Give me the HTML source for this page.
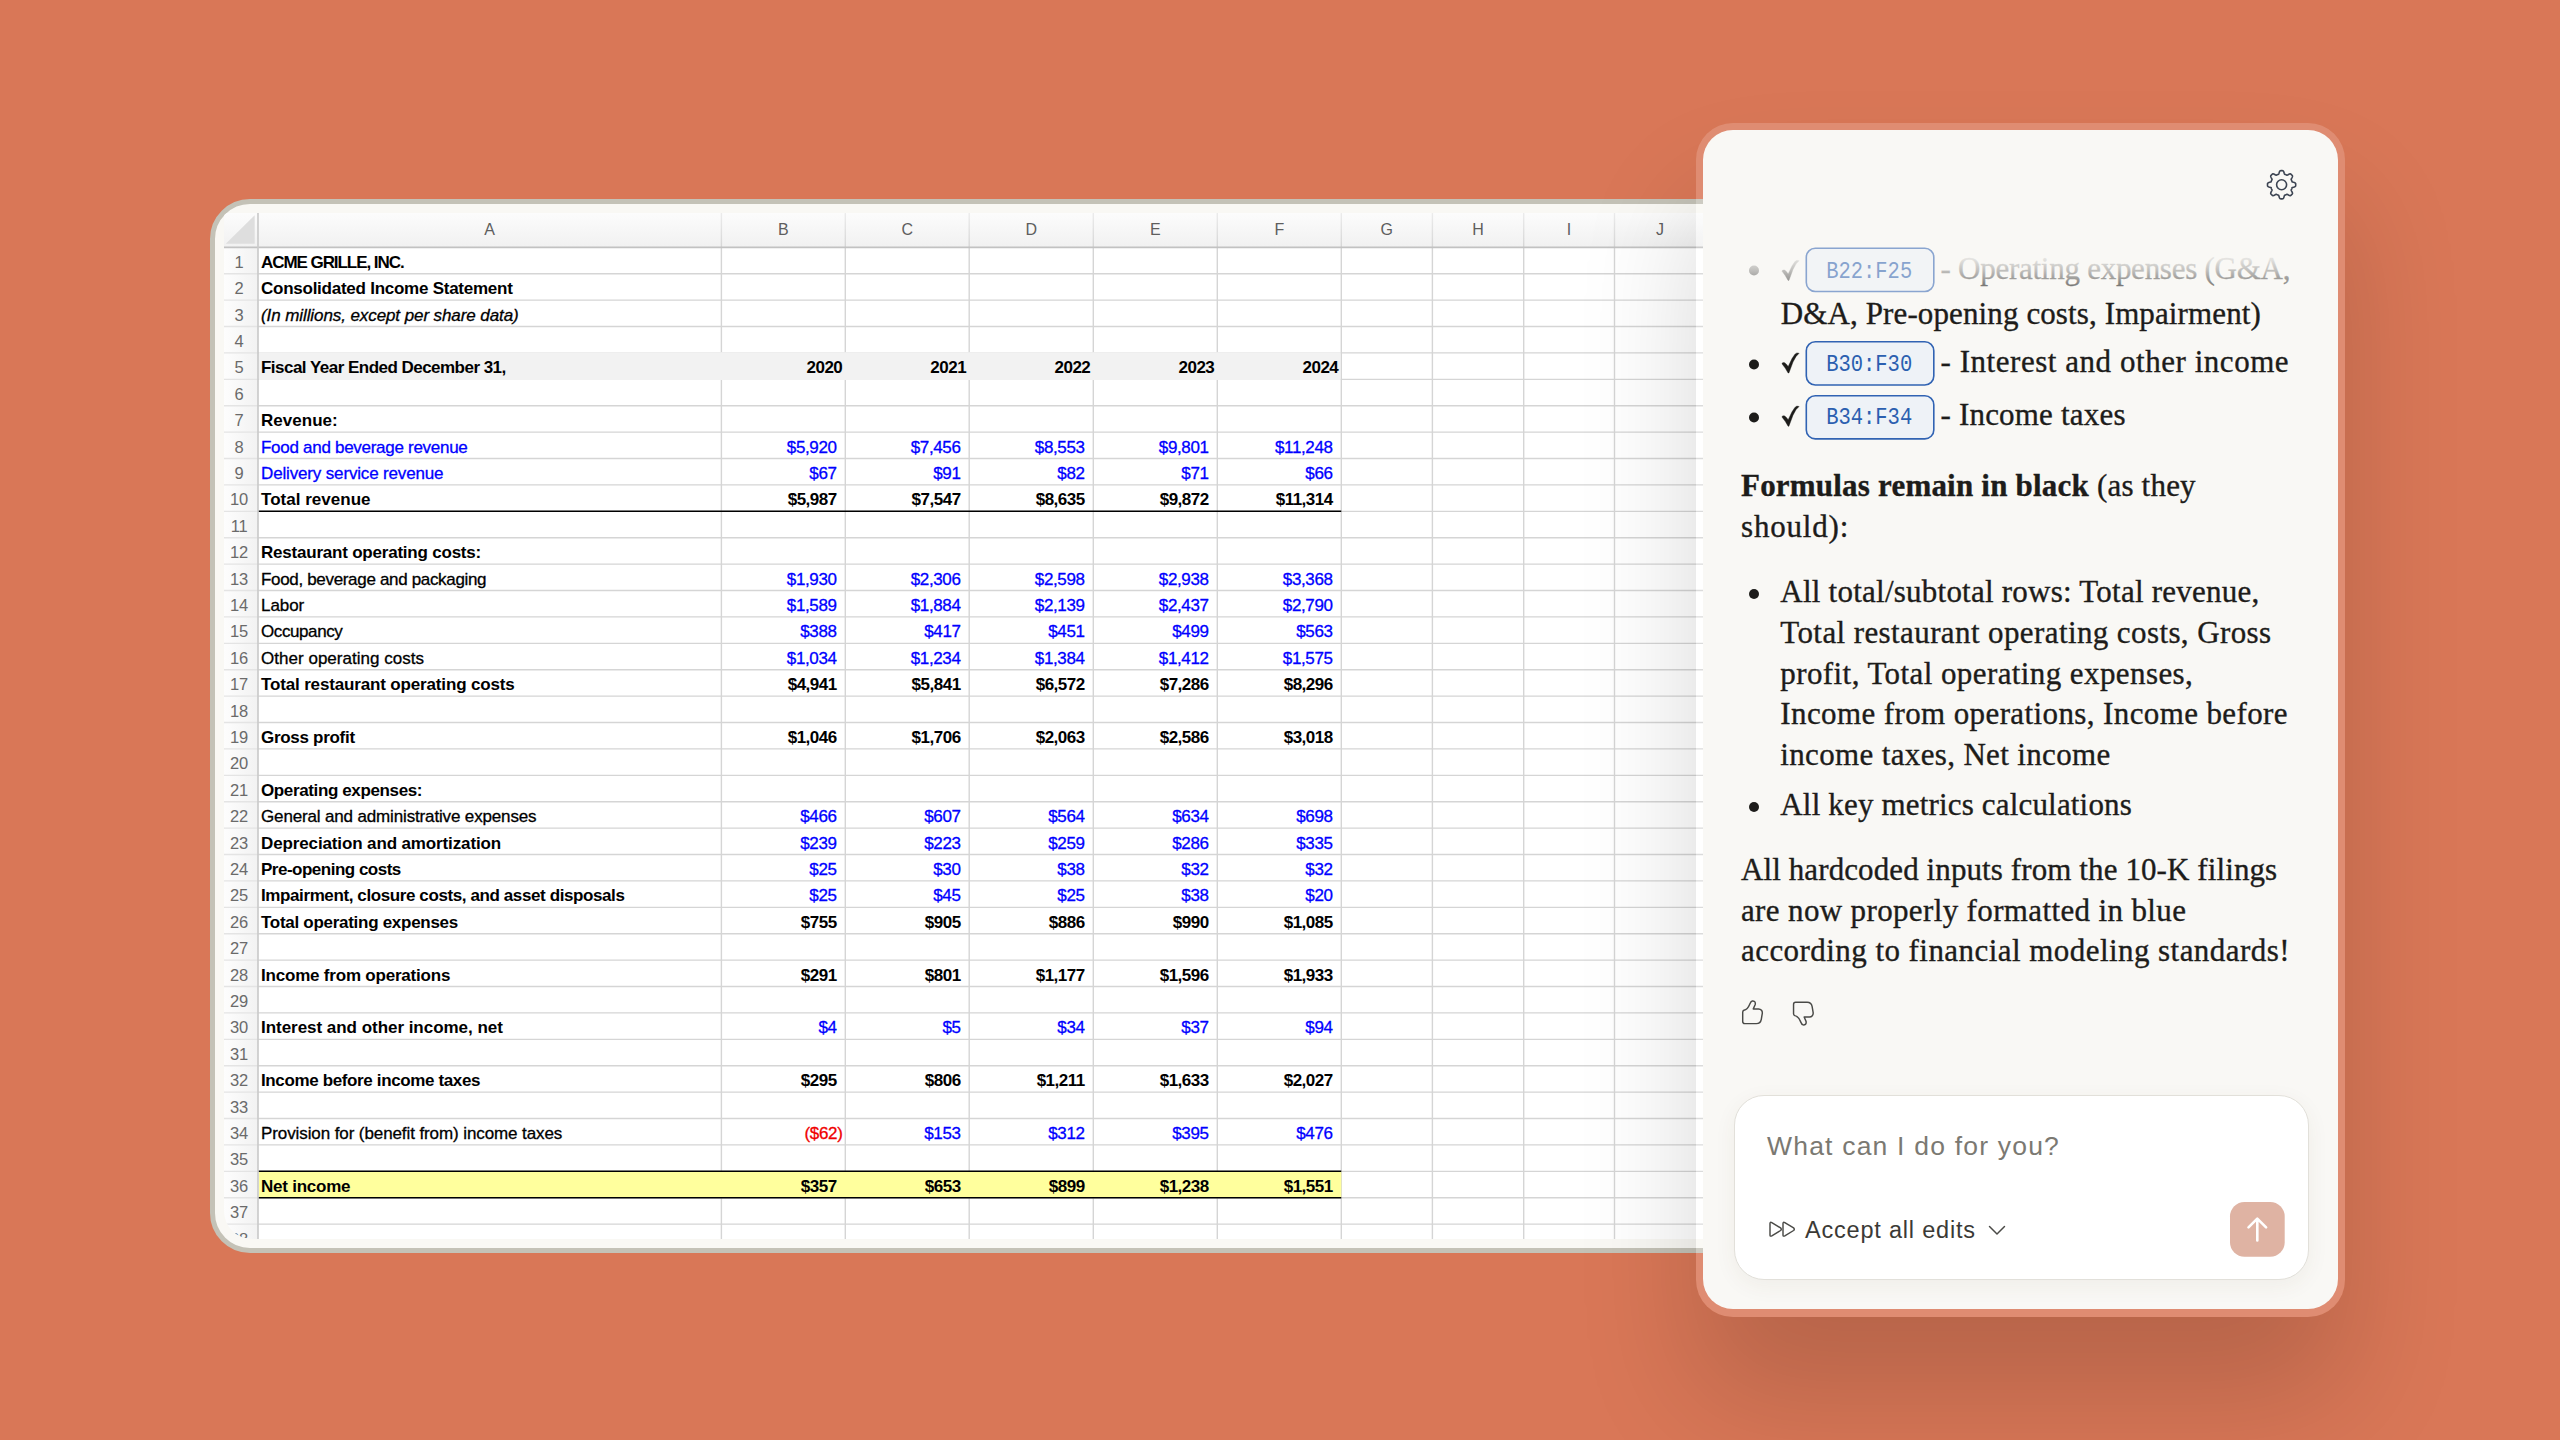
<!DOCTYPE html>
<html><head><meta charset="utf-8"><title>Spreadsheet + Chat</title>
<style>
html,body{margin:0;padding:0}
body{width:2560px;height:1440px;position:relative;overflow:hidden;background:#d97757;font-family:"Liberation Sans",sans-serif}
.abs{position:absolute}
#sheet{left:210px;top:199px;width:1700px;height:1054px;box-sizing:border-box;border:5px solid #c4c2b7;border-radius:40px;background:#f9f8f4;overflow:hidden}
#grid{left:9px;top:9px;width:1600px;height:1026px;border-radius:0 0 0 28px;overflow:hidden}
svg text{font-family:"Liberation Sans",sans-serif}
.ch{font-size:16px;fill:#5e5e5e;text-anchor:middle}
.rn{font-size:16.5px;fill:#6a6a6a;text-anchor:middle;letter-spacing:-0.3px}
.cr{font-size:17px;fill:#000;stroke:#000;stroke-width:0.3px;letter-spacing:-0.35px}
.cb{font-size:17px;fill:#000;font-weight:bold;letter-spacing:-0.5px}
.ci{font-size:17px;fill:#000;stroke:#000;stroke-width:0.3px;font-style:italic;letter-spacing:-0.3px}
.bl{fill:#0000ff;stroke:#0000ff}
.rd{fill:#f00000;stroke:#f00000}
.ra{text-anchor:end}
#pshadow{left:1696px;top:122.5px;width:648.5px;height:1194.5px;border-radius:37px;box-shadow:0 80px 120px rgba(0,0,0,0.155)}
#pborder{left:1696px;top:122.5px;width:648.5px;height:1194.5px;border-radius:37px;background:rgba(255,255,255,0.16)}
#panel{left:1703px;top:130px;width:635px;height:1179px;border-radius:30px;background:#f9f8f5;overflow:hidden}
#fade{left:1703px;top:225px;width:635px;height:75px;background:linear-gradient(to bottom,rgba(249,248,245,1) 0%,rgba(249,248,245,1) 20%,rgba(249,248,245,0.97) 33.3%,rgba(249,248,245,0.89) 46.7%,rgba(249,248,245,0.75) 60%,rgba(249,248,245,0.56) 73.3%,rgba(249,248,245,0.31) 86.7%,rgba(249,248,245,0) 100%)}
#inbox{left:1733.5px;top:1095px;width:575px;height:185px;box-sizing:border-box;border:1.2px solid #e2e0da;border-radius:30px;background:#fff;box-shadow:0 6px 22px rgba(80,60,30,0.06)}
.sr{font-family:"Liberation Serif",serif;font-size:31px;fill:#1d1c1a;stroke:#1d1c1a;stroke-width:0.35px}
.mono{font-family:"Liberation Mono",monospace;font-size:23px;fill:#2b5fb0}
.dot{fill:#1d1c1a}
.ck{fill:#1d1c1a}
.ic{fill:none;stroke:#4a4a47;stroke-width:1.45;stroke-linejoin:round;stroke-linecap:round}
.ph{font-size:26.5px;fill:#7b7972;letter-spacing:1.2px}
.acc{font-size:23.5px;fill:#3b3a36;letter-spacing:0.8px}
svg.full{position:absolute;left:0;top:0;width:2560px;height:1440px;overflow:visible}
</style></head><body>
<div id="sheet" class="abs">
 <div id="grid" class="abs">
  <svg width="1600" height="1026" style="position:absolute;left:0;top:0">
   <defs>
    <linearGradient id="hg" x1="0" y1="0" x2="0" y2="1"><stop offset="0" stop-color="#fcfcfc"/><stop offset="1" stop-color="#f1f1f1"/></linearGradient>
    <linearGradient id="rg" x1="0" y1="0" x2="1" y2="0"><stop offset="0" stop-color="#fdfdfd"/><stop offset="1" stop-color="#f2f2f2"/></linearGradient>
    <linearGradient id="vg" x1="0" y1="0" x2="0" y2="1"><stop offset="0" stop-color="#ececec"/><stop offset="1" stop-color="#d6d6d6"/></linearGradient>
   </defs>
   <g transform="translate(-224,-213)">
<rect x="224" y="213" width="1576" height="34.30000000000001" fill="url(#hg)"/>
<rect x="224" y="247.3" width="34.0" height="991.7" fill="url(#rg)"/>
<rect x="258.0" y="247.3" width="1542.0" height="991.7" fill="#ffffff"/>
<rect x="258.0" y="352.9" width="1083.3" height="26.4" fill="#f2f2f2"/>
<line x1="258.0" y1="273.70" x2="1800" y2="273.70" stroke="#d5d5d5" stroke-width="1.35"/>
<line x1="224" y1="273.70" x2="258.0" y2="273.70" stroke="#e4e4e4" stroke-width="1.35"/>
<line x1="258.0" y1="300.10" x2="1800" y2="300.10" stroke="#d5d5d5" stroke-width="1.35"/>
<line x1="224" y1="300.10" x2="258.0" y2="300.10" stroke="#e4e4e4" stroke-width="1.35"/>
<line x1="258.0" y1="326.50" x2="1800" y2="326.50" stroke="#d5d5d5" stroke-width="1.35"/>
<line x1="224" y1="326.50" x2="258.0" y2="326.50" stroke="#e4e4e4" stroke-width="1.35"/>
<line x1="258.0" y1="352.90" x2="1800" y2="352.90" stroke="#d5d5d5" stroke-width="1.35"/>
<line x1="224" y1="352.90" x2="258.0" y2="352.90" stroke="#e4e4e4" stroke-width="1.35"/>
<line x1="258.0" y1="379.30" x2="1800" y2="379.30" stroke="#d5d5d5" stroke-width="1.35"/>
<line x1="224" y1="379.30" x2="258.0" y2="379.30" stroke="#e4e4e4" stroke-width="1.35"/>
<line x1="258.0" y1="405.70" x2="1800" y2="405.70" stroke="#d5d5d5" stroke-width="1.35"/>
<line x1="224" y1="405.70" x2="258.0" y2="405.70" stroke="#e4e4e4" stroke-width="1.35"/>
<line x1="258.0" y1="432.10" x2="1800" y2="432.10" stroke="#d5d5d5" stroke-width="1.35"/>
<line x1="224" y1="432.10" x2="258.0" y2="432.10" stroke="#e4e4e4" stroke-width="1.35"/>
<line x1="258.0" y1="458.50" x2="1800" y2="458.50" stroke="#d5d5d5" stroke-width="1.35"/>
<line x1="224" y1="458.50" x2="258.0" y2="458.50" stroke="#e4e4e4" stroke-width="1.35"/>
<line x1="258.0" y1="484.90" x2="1800" y2="484.90" stroke="#d5d5d5" stroke-width="1.35"/>
<line x1="224" y1="484.90" x2="258.0" y2="484.90" stroke="#e4e4e4" stroke-width="1.35"/>
<line x1="258.0" y1="511.30" x2="1800" y2="511.30" stroke="#d5d5d5" stroke-width="1.35"/>
<line x1="224" y1="511.30" x2="258.0" y2="511.30" stroke="#e4e4e4" stroke-width="1.35"/>
<line x1="258.0" y1="537.70" x2="1800" y2="537.70" stroke="#d5d5d5" stroke-width="1.35"/>
<line x1="224" y1="537.70" x2="258.0" y2="537.70" stroke="#e4e4e4" stroke-width="1.35"/>
<line x1="258.0" y1="564.10" x2="1800" y2="564.10" stroke="#d5d5d5" stroke-width="1.35"/>
<line x1="224" y1="564.10" x2="258.0" y2="564.10" stroke="#e4e4e4" stroke-width="1.35"/>
<line x1="258.0" y1="590.50" x2="1800" y2="590.50" stroke="#d5d5d5" stroke-width="1.35"/>
<line x1="224" y1="590.50" x2="258.0" y2="590.50" stroke="#e4e4e4" stroke-width="1.35"/>
<line x1="258.0" y1="616.90" x2="1800" y2="616.90" stroke="#d5d5d5" stroke-width="1.35"/>
<line x1="224" y1="616.90" x2="258.0" y2="616.90" stroke="#e4e4e4" stroke-width="1.35"/>
<line x1="258.0" y1="643.30" x2="1800" y2="643.30" stroke="#d5d5d5" stroke-width="1.35"/>
<line x1="224" y1="643.30" x2="258.0" y2="643.30" stroke="#e4e4e4" stroke-width="1.35"/>
<line x1="258.0" y1="669.70" x2="1800" y2="669.70" stroke="#d5d5d5" stroke-width="1.35"/>
<line x1="224" y1="669.70" x2="258.0" y2="669.70" stroke="#e4e4e4" stroke-width="1.35"/>
<line x1="258.0" y1="696.10" x2="1800" y2="696.10" stroke="#d5d5d5" stroke-width="1.35"/>
<line x1="224" y1="696.10" x2="258.0" y2="696.10" stroke="#e4e4e4" stroke-width="1.35"/>
<line x1="258.0" y1="722.50" x2="1800" y2="722.50" stroke="#d5d5d5" stroke-width="1.35"/>
<line x1="224" y1="722.50" x2="258.0" y2="722.50" stroke="#e4e4e4" stroke-width="1.35"/>
<line x1="258.0" y1="748.90" x2="1800" y2="748.90" stroke="#d5d5d5" stroke-width="1.35"/>
<line x1="224" y1="748.90" x2="258.0" y2="748.90" stroke="#e4e4e4" stroke-width="1.35"/>
<line x1="258.0" y1="775.30" x2="1800" y2="775.30" stroke="#d5d5d5" stroke-width="1.35"/>
<line x1="224" y1="775.30" x2="258.0" y2="775.30" stroke="#e4e4e4" stroke-width="1.35"/>
<line x1="258.0" y1="801.70" x2="1800" y2="801.70" stroke="#d5d5d5" stroke-width="1.35"/>
<line x1="224" y1="801.70" x2="258.0" y2="801.70" stroke="#e4e4e4" stroke-width="1.35"/>
<line x1="258.0" y1="828.10" x2="1800" y2="828.10" stroke="#d5d5d5" stroke-width="1.35"/>
<line x1="224" y1="828.10" x2="258.0" y2="828.10" stroke="#e4e4e4" stroke-width="1.35"/>
<line x1="258.0" y1="854.50" x2="1800" y2="854.50" stroke="#d5d5d5" stroke-width="1.35"/>
<line x1="224" y1="854.50" x2="258.0" y2="854.50" stroke="#e4e4e4" stroke-width="1.35"/>
<line x1="258.0" y1="880.90" x2="1800" y2="880.90" stroke="#d5d5d5" stroke-width="1.35"/>
<line x1="224" y1="880.90" x2="258.0" y2="880.90" stroke="#e4e4e4" stroke-width="1.35"/>
<line x1="258.0" y1="907.30" x2="1800" y2="907.30" stroke="#d5d5d5" stroke-width="1.35"/>
<line x1="224" y1="907.30" x2="258.0" y2="907.30" stroke="#e4e4e4" stroke-width="1.35"/>
<line x1="258.0" y1="933.70" x2="1800" y2="933.70" stroke="#d5d5d5" stroke-width="1.35"/>
<line x1="224" y1="933.70" x2="258.0" y2="933.70" stroke="#e4e4e4" stroke-width="1.35"/>
<line x1="258.0" y1="960.10" x2="1800" y2="960.10" stroke="#d5d5d5" stroke-width="1.35"/>
<line x1="224" y1="960.10" x2="258.0" y2="960.10" stroke="#e4e4e4" stroke-width="1.35"/>
<line x1="258.0" y1="986.50" x2="1800" y2="986.50" stroke="#d5d5d5" stroke-width="1.35"/>
<line x1="224" y1="986.50" x2="258.0" y2="986.50" stroke="#e4e4e4" stroke-width="1.35"/>
<line x1="258.0" y1="1012.90" x2="1800" y2="1012.90" stroke="#d5d5d5" stroke-width="1.35"/>
<line x1="224" y1="1012.90" x2="258.0" y2="1012.90" stroke="#e4e4e4" stroke-width="1.35"/>
<line x1="258.0" y1="1039.30" x2="1800" y2="1039.30" stroke="#d5d5d5" stroke-width="1.35"/>
<line x1="224" y1="1039.30" x2="258.0" y2="1039.30" stroke="#e4e4e4" stroke-width="1.35"/>
<line x1="258.0" y1="1065.70" x2="1800" y2="1065.70" stroke="#d5d5d5" stroke-width="1.35"/>
<line x1="224" y1="1065.70" x2="258.0" y2="1065.70" stroke="#e4e4e4" stroke-width="1.35"/>
<line x1="258.0" y1="1092.10" x2="1800" y2="1092.10" stroke="#d5d5d5" stroke-width="1.35"/>
<line x1="224" y1="1092.10" x2="258.0" y2="1092.10" stroke="#e4e4e4" stroke-width="1.35"/>
<line x1="258.0" y1="1118.50" x2="1800" y2="1118.50" stroke="#d5d5d5" stroke-width="1.35"/>
<line x1="224" y1="1118.50" x2="258.0" y2="1118.50" stroke="#e4e4e4" stroke-width="1.35"/>
<line x1="258.0" y1="1144.90" x2="1800" y2="1144.90" stroke="#d5d5d5" stroke-width="1.35"/>
<line x1="224" y1="1144.90" x2="258.0" y2="1144.90" stroke="#e4e4e4" stroke-width="1.35"/>
<line x1="258.0" y1="1171.30" x2="1800" y2="1171.30" stroke="#d5d5d5" stroke-width="1.35"/>
<line x1="224" y1="1171.30" x2="258.0" y2="1171.30" stroke="#e4e4e4" stroke-width="1.35"/>
<line x1="258.0" y1="1197.70" x2="1800" y2="1197.70" stroke="#d5d5d5" stroke-width="1.35"/>
<line x1="224" y1="1197.70" x2="258.0" y2="1197.70" stroke="#e4e4e4" stroke-width="1.35"/>
<line x1="258.0" y1="1224.10" x2="1800" y2="1224.10" stroke="#d5d5d5" stroke-width="1.35"/>
<line x1="224" y1="1224.10" x2="258.0" y2="1224.10" stroke="#e4e4e4" stroke-width="1.35"/>
<line x1="258.0" y1="1250.50" x2="1800" y2="1250.50" stroke="#d5d5d5" stroke-width="1.35"/>
<line x1="224" y1="1250.50" x2="258.0" y2="1250.50" stroke="#e4e4e4" stroke-width="1.35"/>
<line x1="721.4" y1="247.3" x2="721.4" y2="1239" stroke="#d5d5d5" stroke-width="1.4"/>
<rect x="720.6999999999999" y="213" width="1.4" height="34.30000000000001" fill="url(#vg)"/>
<line x1="845.3" y1="247.3" x2="845.3" y2="1239" stroke="#d5d5d5" stroke-width="1.4"/>
<rect x="844.5999999999999" y="213" width="1.4" height="34.30000000000001" fill="url(#vg)"/>
<line x1="969.2" y1="247.3" x2="969.2" y2="1239" stroke="#d5d5d5" stroke-width="1.4"/>
<rect x="968.5" y="213" width="1.4" height="34.30000000000001" fill="url(#vg)"/>
<line x1="1093.3" y1="247.3" x2="1093.3" y2="1239" stroke="#d5d5d5" stroke-width="1.4"/>
<rect x="1092.6" y="213" width="1.4" height="34.30000000000001" fill="url(#vg)"/>
<line x1="1217.3" y1="247.3" x2="1217.3" y2="1239" stroke="#d5d5d5" stroke-width="1.4"/>
<rect x="1216.6" y="213" width="1.4" height="34.30000000000001" fill="url(#vg)"/>
<line x1="1341.3" y1="247.3" x2="1341.3" y2="1239" stroke="#d5d5d5" stroke-width="1.4"/>
<rect x="1340.6" y="213" width="1.4" height="34.30000000000001" fill="url(#vg)"/>
<line x1="1432.4" y1="247.3" x2="1432.4" y2="1239" stroke="#d5d5d5" stroke-width="1.4"/>
<rect x="1431.7" y="213" width="1.4" height="34.30000000000001" fill="url(#vg)"/>
<line x1="1523.7" y1="247.3" x2="1523.7" y2="1239" stroke="#d5d5d5" stroke-width="1.4"/>
<rect x="1523.0" y="213" width="1.4" height="34.30000000000001" fill="url(#vg)"/>
<line x1="1614.5" y1="247.3" x2="1614.5" y2="1239" stroke="#d5d5d5" stroke-width="1.4"/>
<rect x="1613.8" y="213" width="1.4" height="34.30000000000001" fill="url(#vg)"/>
<line x1="1705.7" y1="247.3" x2="1705.7" y2="1239" stroke="#d5d5d5" stroke-width="1.4"/>
<rect x="1705.0" y="213" width="1.4" height="34.30000000000001" fill="url(#vg)"/>
<rect x="259.0" y="352.2" width="1081.6" height="27.799999999999997" fill="#f2f2f2"/>
<rect x="259.0" y="1171.3" width="1082.3" height="26.4" fill="#ffff9d"/>
<line x1="258.0" y1="511.30" x2="1341.3" y2="511.30" stroke="#000" stroke-width="1.4"/>
<line x1="258.0" y1="1171.30" x2="1341.3" y2="1171.30" stroke="#000" stroke-width="1.6"/>
<line x1="258.0" y1="1197.70" x2="1341.3" y2="1197.70" stroke="#000" stroke-width="1.6"/>
<line x1="224" y1="247.3" x2="1800" y2="247.3" stroke="#c2c2c2" stroke-width="1.8"/>
<line x1="258.0" y1="213" x2="258.0" y2="1239" stroke="#cbcbcb" stroke-width="1.7"/>
<polygon points="254.7,215.3 254.7,243.8 225.8,243.8" fill="#dedede"/>
<text x="489.7" y="234.7" class="ch">A</text>
<text x="783.3" y="234.7" class="ch">B</text>
<text x="907.2" y="234.7" class="ch">C</text>
<text x="1031.2" y="234.7" class="ch">D</text>
<text x="1155.3" y="234.7" class="ch">E</text>
<text x="1279.3" y="234.7" class="ch">F</text>
<text x="1386.8" y="234.7" class="ch">G</text>
<text x="1478.1" y="234.7" class="ch">H</text>
<text x="1569.1" y="234.7" class="ch">I</text>
<text x="1660.1" y="234.7" class="ch">J</text>
<text x="239" y="267.80" class="rn">1</text>
<text x="239" y="294.20" class="rn">2</text>
<text x="239" y="320.60" class="rn">3</text>
<text x="239" y="347.00" class="rn">4</text>
<text x="239" y="373.40" class="rn">5</text>
<text x="239" y="399.80" class="rn">6</text>
<text x="239" y="426.20" class="rn">7</text>
<text x="239" y="452.60" class="rn">8</text>
<text x="239" y="479.00" class="rn">9</text>
<text x="239" y="505.40" class="rn">10</text>
<text x="239" y="531.80" class="rn">11</text>
<text x="239" y="558.20" class="rn">12</text>
<text x="239" y="584.60" class="rn">13</text>
<text x="239" y="611.00" class="rn">14</text>
<text x="239" y="637.40" class="rn">15</text>
<text x="239" y="663.80" class="rn">16</text>
<text x="239" y="690.20" class="rn">17</text>
<text x="239" y="716.60" class="rn">18</text>
<text x="239" y="743.00" class="rn">19</text>
<text x="239" y="769.40" class="rn">20</text>
<text x="239" y="795.80" class="rn">21</text>
<text x="239" y="822.20" class="rn">22</text>
<text x="239" y="848.60" class="rn">23</text>
<text x="239" y="875.00" class="rn">24</text>
<text x="239" y="901.40" class="rn">25</text>
<text x="239" y="927.80" class="rn">26</text>
<text x="239" y="954.20" class="rn">27</text>
<text x="239" y="980.60" class="rn">28</text>
<text x="239" y="1007.00" class="rn">29</text>
<text x="239" y="1033.40" class="rn">30</text>
<text x="239" y="1059.80" class="rn">31</text>
<text x="239" y="1086.20" class="rn">32</text>
<text x="239" y="1112.60" class="rn">33</text>
<text x="239" y="1139.00" class="rn">34</text>
<text x="239" y="1165.40" class="rn">35</text>
<text x="239" y="1191.80" class="rn">36</text>
<text x="239" y="1218.20" class="rn">37</text>
<text x="239" y="1244.60" class="rn">38</text>
<text x="261" y="267.70" class="cb" textLength="143.14" lengthAdjust="spacing">ACME GRILLE, INC.</text>
<text x="261" y="294.10" class="cb" textLength="251.37" lengthAdjust="spacing">Consolidated Income Statement</text>
<text x="261" y="320.50" class="ci" textLength="257.41" lengthAdjust="spacing">(In millions, except per share data)</text>
<text x="261" y="373.30" class="cb" textLength="244.78" lengthAdjust="spacing">Fiscal Year Ended December 31,</text>
<text x="842.3" y="372.90" class="cb ra">2020</text>
<text x="966.2" y="372.90" class="cb ra">2021</text>
<text x="1090.3" y="372.90" class="cb ra">2022</text>
<text x="1214.3" y="372.90" class="cb ra">2023</text>
<text x="1338.3" y="372.90" class="cb ra">2024</text>
<text x="261" y="426.10" class="cb" textLength="76.19" lengthAdjust="spacing">Revenue:</text>
<text x="261" y="452.50" class="cr bl" textLength="206.42" lengthAdjust="spacing">Food and beverage revenue</text>
<text x="836.7" y="452.50" class="cr bl ra">$5,920</text>
<text x="960.6" y="452.50" class="cr bl ra">$7,456</text>
<text x="1084.7" y="452.50" class="cr bl ra">$8,553</text>
<text x="1208.7" y="452.50" class="cr bl ra">$9,801</text>
<text x="1332.7" y="452.50" class="cr bl ra">$11,248</text>
<text x="261" y="478.90" class="cr bl" textLength="182.22" lengthAdjust="spacing">Delivery service revenue</text>
<text x="836.7" y="478.90" class="cr bl ra">$67</text>
<text x="960.6" y="478.90" class="cr bl ra">$91</text>
<text x="1084.7" y="478.90" class="cr bl ra">$82</text>
<text x="1208.7" y="478.90" class="cr bl ra">$71</text>
<text x="1332.7" y="478.90" class="cr bl ra">$66</text>
<text x="261" y="505.30" class="cb" textLength="109.06" lengthAdjust="spacing">Total revenue</text>
<text x="836.7" y="505.30" class="cb ra">$5,987</text>
<text x="960.6" y="505.30" class="cb ra">$7,547</text>
<text x="1084.7" y="505.30" class="cb ra">$8,635</text>
<text x="1208.7" y="505.30" class="cb ra">$9,872</text>
<text x="1332.7" y="505.30" class="cb ra">$11,314</text>
<text x="261" y="558.10" class="cb" textLength="219.74" lengthAdjust="spacing">Restaurant operating costs:</text>
<text x="261" y="584.50" class="cr" textLength="225.23" lengthAdjust="spacing">Food, beverage and packaging</text>
<text x="836.7" y="584.50" class="cr bl ra">$1,930</text>
<text x="960.6" y="584.50" class="cr bl ra">$2,306</text>
<text x="1084.7" y="584.50" class="cr bl ra">$2,598</text>
<text x="1208.7" y="584.50" class="cr bl ra">$2,938</text>
<text x="1332.7" y="584.50" class="cr bl ra">$3,368</text>
<text x="261" y="610.90" class="cr" textLength="42.86" lengthAdjust="spacing">Labor</text>
<text x="836.7" y="610.90" class="cr bl ra">$1,589</text>
<text x="960.6" y="610.90" class="cr bl ra">$1,884</text>
<text x="1084.7" y="610.90" class="cr bl ra">$2,139</text>
<text x="1208.7" y="610.90" class="cr bl ra">$2,437</text>
<text x="1332.7" y="610.90" class="cr bl ra">$2,790</text>
<text x="261" y="637.30" class="cr" textLength="81.46" lengthAdjust="spacing">Occupancy</text>
<text x="836.7" y="637.30" class="cr bl ra">$388</text>
<text x="960.6" y="637.30" class="cr bl ra">$417</text>
<text x="1084.7" y="637.30" class="cr bl ra">$451</text>
<text x="1208.7" y="637.30" class="cr bl ra">$499</text>
<text x="1332.7" y="637.30" class="cr bl ra">$563</text>
<text x="261" y="663.70" class="cr" textLength="162.75" lengthAdjust="spacing">Other operating costs</text>
<text x="836.7" y="663.70" class="cr bl ra">$1,034</text>
<text x="960.6" y="663.70" class="cr bl ra">$1,234</text>
<text x="1084.7" y="663.70" class="cr bl ra">$1,384</text>
<text x="1208.7" y="663.70" class="cr bl ra">$1,412</text>
<text x="1332.7" y="663.70" class="cr bl ra">$1,575</text>
<text x="261" y="690.10" class="cb" textLength="253.25" lengthAdjust="spacing">Total restaurant operating costs</text>
<text x="836.7" y="690.10" class="cb ra">$4,941</text>
<text x="960.6" y="690.10" class="cb ra">$5,841</text>
<text x="1084.7" y="690.10" class="cb ra">$6,572</text>
<text x="1208.7" y="690.10" class="cb ra">$7,286</text>
<text x="1332.7" y="690.10" class="cb ra">$8,296</text>
<text x="261" y="742.90" class="cb" textLength="93.59" lengthAdjust="spacing">Gross profit</text>
<text x="836.7" y="742.90" class="cb ra">$1,046</text>
<text x="960.6" y="742.90" class="cb ra">$1,706</text>
<text x="1084.7" y="742.90" class="cb ra">$2,063</text>
<text x="1208.7" y="742.90" class="cb ra">$2,586</text>
<text x="1332.7" y="742.90" class="cb ra">$3,018</text>
<text x="261" y="795.70" class="cb" textLength="160.99" lengthAdjust="spacing">Operating expenses:</text>
<text x="261" y="822.10" class="cr" textLength="275.22" lengthAdjust="spacing">General and administrative expenses</text>
<text x="836.7" y="822.10" class="cr bl ra">$466</text>
<text x="960.6" y="822.10" class="cr bl ra">$607</text>
<text x="1084.7" y="822.10" class="cr bl ra">$564</text>
<text x="1208.7" y="822.10" class="cr bl ra">$634</text>
<text x="1332.7" y="822.10" class="cr bl ra">$698</text>
<text x="261" y="848.50" class="cb" textLength="239.66" lengthAdjust="spacing">Depreciation and amortization</text>
<text x="836.7" y="848.50" class="cr bl ra">$239</text>
<text x="960.6" y="848.50" class="cr bl ra">$223</text>
<text x="1084.7" y="848.50" class="cr bl ra">$259</text>
<text x="1208.7" y="848.50" class="cr bl ra">$286</text>
<text x="1332.7" y="848.50" class="cr bl ra">$335</text>
<text x="261" y="874.90" class="cb" textLength="139.81" lengthAdjust="spacing">Pre-opening costs</text>
<text x="836.7" y="874.90" class="cr bl ra">$25</text>
<text x="960.6" y="874.90" class="cr bl ra">$30</text>
<text x="1084.7" y="874.90" class="cr bl ra">$38</text>
<text x="1208.7" y="874.90" class="cr bl ra">$32</text>
<text x="1332.7" y="874.90" class="cr bl ra">$32</text>
<text x="261" y="901.30" class="cb" textLength="363.41" lengthAdjust="spacing">Impairment, closure costs, and asset disposals</text>
<text x="836.7" y="901.30" class="cr bl ra">$25</text>
<text x="960.6" y="901.30" class="cr bl ra">$45</text>
<text x="1084.7" y="901.30" class="cr bl ra">$25</text>
<text x="1208.7" y="901.30" class="cr bl ra">$38</text>
<text x="1332.7" y="901.30" class="cr bl ra">$20</text>
<text x="261" y="927.70" class="cb" textLength="196.74" lengthAdjust="spacing">Total operating expenses</text>
<text x="836.7" y="927.70" class="cb ra">$755</text>
<text x="960.6" y="927.70" class="cb ra">$905</text>
<text x="1084.7" y="927.70" class="cb ra">$886</text>
<text x="1208.7" y="927.70" class="cb ra">$990</text>
<text x="1332.7" y="927.70" class="cb ra">$1,085</text>
<text x="261" y="980.50" class="cb" textLength="188.93" lengthAdjust="spacing">Income from operations</text>
<text x="836.7" y="980.50" class="cb ra">$291</text>
<text x="960.6" y="980.50" class="cb ra">$801</text>
<text x="1084.7" y="980.50" class="cb ra">$1,177</text>
<text x="1208.7" y="980.50" class="cb ra">$1,596</text>
<text x="1332.7" y="980.50" class="cb ra">$1,933</text>
<text x="261" y="1033.30" class="cb" textLength="241.32" lengthAdjust="spacing">Interest and other income, net</text>
<text x="836.7" y="1033.30" class="cr bl ra">$4</text>
<text x="960.6" y="1033.30" class="cr bl ra">$5</text>
<text x="1084.7" y="1033.30" class="cr bl ra">$34</text>
<text x="1208.7" y="1033.30" class="cr bl ra">$37</text>
<text x="1332.7" y="1033.30" class="cr bl ra">$94</text>
<text x="261" y="1086.10" class="cb" textLength="218.97" lengthAdjust="spacing">Income before income taxes</text>
<text x="836.7" y="1086.10" class="cb ra">$295</text>
<text x="960.6" y="1086.10" class="cb ra">$806</text>
<text x="1084.7" y="1086.10" class="cb ra">$1,211</text>
<text x="1208.7" y="1086.10" class="cb ra">$1,633</text>
<text x="1332.7" y="1086.10" class="cb ra">$2,027</text>
<text x="261" y="1138.90" class="cr" textLength="300.98" lengthAdjust="spacing">Provision for (benefit from) income taxes</text>
<text x="842.5" y="1138.90" class="cr ra rd">($62)</text>
<text x="960.6" y="1138.90" class="cr bl ra">$153</text>
<text x="1084.7" y="1138.90" class="cr bl ra">$312</text>
<text x="1208.7" y="1138.90" class="cr bl ra">$395</text>
<text x="1332.7" y="1138.90" class="cr bl ra">$476</text>
<text x="261" y="1191.70" class="cb" textLength="89.09" lengthAdjust="spacing">Net income</text>
<text x="836.7" y="1191.70" class="cb ra">$357</text>
<text x="960.6" y="1191.70" class="cb ra">$653</text>
<text x="1084.7" y="1191.70" class="cb ra">$899</text>
<text x="1208.7" y="1191.70" class="cb ra">$1,238</text>
<text x="1332.7" y="1191.70" class="cb ra">$1,551</text>
   </g>
  </svg>
 </div>
</div>
<div id="pshadow" class="abs"></div>
<div id="pborder" class="abs"></div>
<div id="panel" class="abs"></div>
<svg class="full" viewBox="0 0 2560 1440">
<circle cx="1754" cy="270.5" r="5" class="dot"/>
<path d="M1781.9 270.9 L1783.0 270.0 L1784.7 270.1 L1786.4 271.6 L1788.2 274.0 L1792.0 266.0 L1794.9 261.6 L1796.9 260.3 L1799.1 260.7 L1796.1 263.8 L1793.0 269.4 L1788.9 280.4 L1788.1 280.4 L1785.2 275.5 L1782.3 271.6Z" class="ck" stroke="#1d1c1a" stroke-width="0.4" stroke-linejoin="round"/>
<text x="1940.5" y="279.2" class="sr" textLength="349.9" lengthAdjust="spacing">- Operating expenses (G&amp;A,</text>
<text x="1780.8" y="324.1" class="sr" textLength="480.0" lengthAdjust="spacing">D&amp;A, Pre-opening costs, Impairment)</text>
<circle cx="1754" cy="364.5" r="5" class="dot"/>
<path d="M1781.9 363.5 L1783.0 362.6 L1784.7 362.7 L1786.4 364.2 L1788.2 366.6 L1792.0 358.6 L1794.9 354.2 L1796.9 352.9 L1799.1 353.3 L1796.1 356.4 L1793.0 362.0 L1788.9 373.0 L1788.1 373.0 L1785.2 368.1 L1782.3 364.2Z" class="ck" stroke="#1d1c1a" stroke-width="0.4" stroke-linejoin="round"/>
<rect x="1806.3" y="341.8" width="127.5" height="43.2" rx="9" fill="#eef2f7" stroke="#3163b3" stroke-width="1.6"/><text transform="translate(1826.2,370.8) scale(0.89,1)" class="mono">B30:F30</text>
<text x="1940.5" y="371.8" class="sr" textLength="348.1" lengthAdjust="spacing">- Interest and other income</text>
<circle cx="1754" cy="417.5" r="5" class="dot"/>
<path d="M1781.9 416.7 L1783.0 415.8 L1784.7 415.9 L1786.4 417.4 L1788.2 419.8 L1792.0 411.8 L1794.9 407.4 L1796.9 406.1 L1799.1 406.5 L1796.1 409.6 L1793.0 415.2 L1788.9 426.2 L1788.1 426.2 L1785.2 421.3 L1782.3 417.4Z" class="ck" stroke="#1d1c1a" stroke-width="0.4" stroke-linejoin="round"/>
<rect x="1806.3" y="395.7" width="127.5" height="43.2" rx="9" fill="#eef2f7" stroke="#3163b3" stroke-width="1.6"/><text transform="translate(1826.2,424.2) scale(0.89,1)" class="mono">B34:F34</text>
<text x="1940.5" y="425" class="sr" textLength="185.0" lengthAdjust="spacing">- Income taxes</text>
<text x="1741" y="496.2" class="sr" textLength="454.6" lengthAdjust="spacing"><tspan font-weight="bold">Formulas remain in black</tspan> (as they</text>
<text x="1741" y="537" class="sr" textLength="107.3" lengthAdjust="spacing">should):</text>
<text x="1780.3" y="601.7" class="sr" textLength="478.9" lengthAdjust="spacing">All total/subtotal rows: Total revenue,</text>
<text x="1780.3" y="642.6" class="sr" textLength="490.8" lengthAdjust="spacing">Total restaurant operating costs, Gross</text>
<text x="1780.3" y="683.5" class="sr" textLength="412.5" lengthAdjust="spacing">profit, Total operating expenses,</text>
<text x="1780.3" y="724.4" class="sr" textLength="507.3" lengthAdjust="spacing">Income from operations, Income before</text>
<text x="1780.3" y="765.3" class="sr" textLength="330.0" lengthAdjust="spacing">income taxes, Net income</text>
<circle cx="1754" cy="594" r="5" class="dot"/>
<text x="1780.3" y="815.4" class="sr" textLength="351.5" lengthAdjust="spacing">All key metrics calculations</text>
<circle cx="1754" cy="807" r="5" class="dot"/>
<text x="1741" y="879.7" class="sr" textLength="536.2" lengthAdjust="spacing">All hardcoded inputs from the 10-K filings</text>
<text x="1741" y="920.5" class="sr" textLength="444.9" lengthAdjust="spacing">are now properly formatted in blue</text>
<text x="1741" y="961.2" class="sr" textLength="548.5" lengthAdjust="spacing">according to financial modeling standards!</text>
<path d="M1753.3 1008.9 L1755.2 1004.5 C1755.8 1001.5 1753.8 1000.8 1752.2 1001.0 C1750.9 1001.2 1750.3 1002.8 1749.6 1004.5 C1748.4 1007.5 1747.3 1009.5 1743.9 1010.3 C1743.1 1010.6 1742.7 1011.2 1742.7 1012.2 L1742.7 1021.5 C1742.7 1022.7 1743.5 1023.6 1744.8 1023.6 L1756.3 1023.6 C1759 1023.6 1760.8 1022 1761.3 1019.3 L1762.3 1013.3 C1762.6 1010.9 1761 1008.9 1758.6 1008.9 Z" class="ic"/>
<path d="M1753.3 1008.9 L1755.2 1004.5 C1755.8 1001.5 1753.8 1000.8 1752.2 1001.0 C1750.9 1001.2 1750.3 1002.8 1749.6 1004.5 C1748.4 1007.5 1747.3 1009.5 1743.9 1010.3 C1743.1 1010.6 1742.7 1011.2 1742.7 1012.2 L1742.7 1021.5 C1742.7 1022.7 1743.5 1023.6 1744.8 1023.6 L1756.3 1023.6 C1759 1023.6 1760.8 1022 1761.3 1019.3 L1762.3 1013.3 C1762.6 1010.9 1761 1008.9 1758.6 1008.9 Z" class="ic" transform="translate(50.85,2025.9) scale(1,-1)"/>
</svg>
<div id="fade" class="abs"></div>
<svg class="full" viewBox="0 0 2560 1440">
<g opacity="0.55"><rect x="1806.3" y="248.3" width="127.5" height="43.2" rx="9" fill="#eef2f7" stroke="#3163b3" stroke-width="1.6"/><text transform="translate(1826.2,277.7) scale(0.89,1)" class="mono">B22:F25</text></g>
<path d="M2281.60 170.65 L2281.88 170.65 L2282.15 170.66 L2282.43 170.67 L2282.71 170.69 L2282.98 170.78 L2283.23 170.97 L2283.46 171.28 L2283.67 171.67 L2283.85 172.12 L2284.01 172.61 L2284.16 173.10 L2284.29 173.56 L2284.42 173.95 L2284.57 174.22 L2284.76 174.32 L2284.97 174.38 L2285.17 174.45 L2285.37 174.52 L2285.57 174.60 L2285.77 174.68 L2285.97 174.76 L2286.16 174.85 L2286.36 174.94 L2286.55 175.04 L2286.74 175.14 L2286.94 175.21 L2287.24 175.12 L2287.61 174.94 L2288.03 174.71 L2288.48 174.46 L2288.93 174.23 L2289.38 174.04 L2289.81 173.91 L2290.19 173.86 L2290.51 173.90 L2290.76 174.03 L2290.97 174.21 L2291.17 174.40 L2291.37 174.59 L2291.57 174.78 L2291.76 174.98 L2291.95 175.18 L2292.14 175.38 L2292.32 175.59 L2292.45 175.84 L2292.49 176.16 L2292.44 176.54 L2292.31 176.97 L2292.12 177.42 L2291.89 177.87 L2291.64 178.32 L2291.41 178.74 L2291.23 179.11 L2291.14 179.41 L2291.21 179.61 L2291.31 179.80 L2291.41 179.99 L2291.50 180.19 L2291.59 180.38 L2291.67 180.58 L2291.75 180.78 L2291.83 180.98 L2291.90 181.18 L2291.97 181.38 L2292.03 181.59 L2292.13 181.78 L2292.40 181.93 L2292.79 182.06 L2293.25 182.19 L2293.74 182.34 L2294.23 182.50 L2294.68 182.68 L2295.07 182.89 L2295.38 183.12 L2295.57 183.37 L2295.66 183.64 L2295.68 183.92 L2295.69 184.20 L2295.70 184.47 L2295.70 184.75 L2295.70 185.03 L2295.69 185.30 L2295.68 185.58 L2295.66 185.86 L2295.57 186.13 L2295.38 186.38 L2295.07 186.61 L2294.68 186.82 L2294.23 187.00 L2293.74 187.16 L2293.25 187.31 L2292.79 187.44 L2292.40 187.57 L2292.13 187.72 L2292.03 187.91 L2291.97 188.12 L2291.90 188.32 L2291.83 188.52 L2291.75 188.72 L2291.67 188.92 L2291.59 189.12 L2291.50 189.31 L2291.41 189.51 L2291.31 189.70 L2291.21 189.89 L2291.14 190.09 L2291.23 190.39 L2291.41 190.76 L2291.64 191.18 L2291.89 191.63 L2292.12 192.08 L2292.31 192.53 L2292.44 192.96 L2292.49 193.34 L2292.45 193.66 L2292.32 193.91 L2292.14 194.12 L2291.95 194.32 L2291.76 194.52 L2291.57 194.72 L2291.37 194.91 L2291.17 195.10 L2290.97 195.29 L2290.76 195.47 L2290.51 195.60 L2290.19 195.64 L2289.81 195.59 L2289.38 195.46 L2288.93 195.27 L2288.48 195.04 L2288.03 194.79 L2287.61 194.56 L2287.24 194.38 L2286.94 194.29 L2286.74 194.36 L2286.55 194.46 L2286.36 194.56 L2286.16 194.65 L2285.97 194.74 L2285.77 194.82 L2285.57 194.90 L2285.37 194.98 L2285.17 195.05 L2284.97 195.12 L2284.76 195.18 L2284.57 195.28 L2284.42 195.55 L2284.29 195.94 L2284.16 196.40 L2284.01 196.89 L2283.85 197.38 L2283.67 197.83 L2283.46 198.22 L2283.23 198.53 L2282.98 198.72 L2282.71 198.81 L2282.43 198.83 L2282.15 198.84 L2281.88 198.85 L2281.60 198.85 L2281.32 198.85 L2281.05 198.84 L2280.77 198.83 L2280.49 198.81 L2280.22 198.72 L2279.97 198.53 L2279.74 198.22 L2279.53 197.83 L2279.35 197.38 L2279.19 196.89 L2279.04 196.40 L2278.91 195.94 L2278.78 195.55 L2278.63 195.28 L2278.44 195.18 L2278.23 195.12 L2278.03 195.05 L2277.83 194.98 L2277.63 194.90 L2277.43 194.82 L2277.23 194.74 L2277.04 194.65 L2276.84 194.56 L2276.65 194.46 L2276.46 194.36 L2276.26 194.29 L2275.96 194.38 L2275.59 194.56 L2275.17 194.79 L2274.72 195.04 L2274.27 195.27 L2273.82 195.46 L2273.39 195.59 L2273.01 195.64 L2272.69 195.60 L2272.44 195.47 L2272.23 195.29 L2272.03 195.10 L2271.83 194.91 L2271.63 194.72 L2271.44 194.52 L2271.25 194.32 L2271.06 194.12 L2270.88 193.91 L2270.75 193.66 L2270.71 193.34 L2270.76 192.96 L2270.89 192.53 L2271.08 192.08 L2271.31 191.63 L2271.56 191.18 L2271.79 190.76 L2271.97 190.39 L2272.06 190.09 L2271.99 189.89 L2271.89 189.70 L2271.79 189.51 L2271.70 189.31 L2271.61 189.12 L2271.53 188.92 L2271.45 188.72 L2271.37 188.52 L2271.30 188.32 L2271.23 188.12 L2271.17 187.91 L2271.07 187.72 L2270.80 187.57 L2270.41 187.44 L2269.95 187.31 L2269.46 187.16 L2268.97 187.00 L2268.52 186.82 L2268.13 186.61 L2267.82 186.38 L2267.63 186.13 L2267.54 185.86 L2267.52 185.58 L2267.51 185.30 L2267.50 185.03 L2267.50 184.75 L2267.50 184.47 L2267.51 184.20 L2267.52 183.92 L2267.54 183.64 L2267.63 183.37 L2267.82 183.12 L2268.13 182.89 L2268.52 182.68 L2268.97 182.50 L2269.46 182.34 L2269.95 182.19 L2270.41 182.06 L2270.80 181.93 L2271.07 181.78 L2271.17 181.59 L2271.23 181.38 L2271.30 181.18 L2271.37 180.98 L2271.45 180.78 L2271.53 180.58 L2271.61 180.38 L2271.70 180.19 L2271.79 179.99 L2271.89 179.80 L2271.99 179.61 L2272.06 179.41 L2271.97 179.11 L2271.79 178.74 L2271.56 178.32 L2271.31 177.87 L2271.08 177.42 L2270.89 176.97 L2270.76 176.54 L2270.71 176.16 L2270.75 175.84 L2270.88 175.59 L2271.06 175.38 L2271.25 175.18 L2271.44 174.98 L2271.63 174.78 L2271.83 174.59 L2272.03 174.40 L2272.23 174.21 L2272.44 174.03 L2272.69 173.90 L2273.01 173.86 L2273.39 173.91 L2273.82 174.04 L2274.27 174.23 L2274.72 174.46 L2275.17 174.71 L2275.59 174.94 L2275.96 175.12 L2276.26 175.21 L2276.46 175.14 L2276.65 175.04 L2276.84 174.94 L2277.04 174.85 L2277.23 174.76 L2277.43 174.68 L2277.63 174.60 L2277.83 174.52 L2278.03 174.45 L2278.23 174.38 L2278.44 174.32 L2278.63 174.22 L2278.78 173.95 L2278.91 173.56 L2279.04 173.10 L2279.19 172.61 L2279.35 172.12 L2279.53 171.67 L2279.74 171.28 L2279.97 170.97 L2280.22 170.78 L2280.49 170.69 L2280.77 170.67 L2281.05 170.66 L2281.32 170.65Z" fill="none" stroke="#3c4452" stroke-width="1.6" stroke-linejoin="round"/>
<circle cx="2281.6" cy="184.75" r="5" fill="none" stroke="#3c4452" stroke-width="1.6"/>
</svg>
<div id="inbox" class="abs"></div>
<svg class="full" viewBox="0 0 2560 1440">
<text x="1767" y="1155" class="ph">What can I do for you?</text>
<text x="1805" y="1237.6" class="acc">Accept all edits</text>
<path d="M1770 1223.5 Q1770 1221.6 1771.8 1222.6 L1780.6 1227.9 Q1782 1229.2 1780.6 1230.5 L1771.8 1235.8 Q1770 1236.8 1770 1234.9 Z M1783 1223.5 Q1783 1221.6 1784.8 1222.6 L1793.6 1227.9 Q1795 1229.2 1793.6 1230.5 L1784.8 1235.8 Q1783 1236.8 1783 1234.9 Z" class="ic"/>
<path d="M1989.5 1226.5 L1997 1234 L2004.5 1226.5" class="ic"/>
<rect x="2230" y="1202" width="54.7" height="54.7" rx="14.5" fill="#dfb3a3"/>
<path d="M2257.3 1240.5 L2257.3 1218.8 M2248.5 1227.4 L2257.3 1218.6 L2266.1 1227.4" fill="none" stroke="#fff" stroke-width="2.6" stroke-linecap="round" stroke-linejoin="round"/>
</svg>
</body></html>
